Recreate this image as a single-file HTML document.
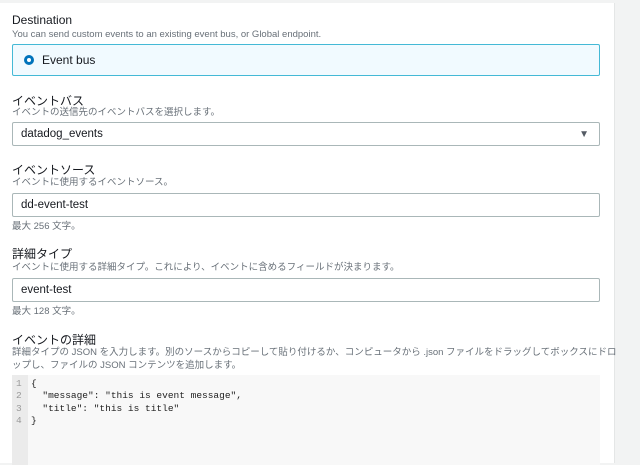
<!DOCTYPE html>
<html><head><meta charset="utf-8"><style>
*{margin:0;padding:0;box-sizing:border-box}
body{width:640px;height:458px;overflow:hidden;background:#f2f3f3;font-family:"Liberation Sans","Noto Sans CJK JP",sans-serif;color:#16191f;position:relative}
.panel{position:absolute;left:0;top:3px;width:615px;height:460px;background:#fff;border-right:1px solid #e4e6e6}
.a{position:absolute;white-space:nowrap;line-height:1.2}
.l{font-size:12px;color:#16191f}
.d{font-size:9.5px;color:#687078}
.in{position:absolute;left:12px;width:588px;height:24px;border:1px solid #aab7b8;border-radius:2px;font-size:11.5px;padding:5px 8px;background:#fff;line-height:1.2}
</style></head><body>
<div class="panel"></div>
<div class="a l" style="left:12px;top:13px">Destination</div>
<div class="a d" style="left:12px;top:29px">You can send custom events to an existing event bus, or Global endpoint.</div>
<div style="position:absolute;left:12px;top:44px;width:588px;height:32px;background:#f1faff;border:1px solid #44b9d6;border-radius:2px"></div>
<div style="position:absolute;left:24px;top:55px;width:10px;height:10px;border-radius:50%;border:3px solid #0073bb;background:#fff"></div>
<div class="a l" style="left:42px;top:53px">Event bus</div>
<div class="a l" style="left:12px;top:94px">イベントバス</div>
<div class="a d" style="left:12px;top:107px">イベントの送信先のイベントバスを選択します。</div>
<div class="in" style="top:122px">datadog_events<span style="position:absolute;right:10px;top:6px;font-size:10px;color:#545b64">▼</span></div>
<div class="a l" style="left:12px;top:163px">イベントソース</div>
<div class="a d" style="left:12px;top:177px">イベントに使用するイベントソース。</div>
<div class="in" style="top:193px">dd-event-test</div>
<div class="a d" style="left:12px;top:221px">最大 256 文字。</div>
<div class="a l" style="left:12px;top:247px">詳細タイプ</div>
<div class="a d" style="left:12px;top:262px">イベントに使用する詳細タイプ。これにより、イベントに含めるフィールドが決まります。</div>
<div class="in" style="top:278px">event-test</div>
<div class="a d" style="left:12px;top:306px">最大 128 文字。</div>
<div class="a l" style="left:12px;top:333px">イベントの詳細</div>
<div class="a d" style="left:12px;top:347px">詳細タイプの JSON を入力します。別のソースからコピーして貼り付けるか、コンピュータから .json ファイルをドラッグしてボックスにドロ</div>
<div class="a d" style="left:12px;top:360px">ップし、ファイルの JSON コンテンツを追加します。</div>
<div style="position:absolute;left:12px;top:375px;width:588px;height:90px;background:#f8f8f8"></div>
<div style="position:absolute;left:12px;top:375px;width:16px;height:90px;background:#ebebeb"></div>
<pre style="position:absolute;left:16px;top:378px;font-family:'Liberation Mono',monospace;font-size:9.5px;line-height:12.3px;color:#999">1
2
3
4</pre>
<pre style="position:absolute;left:31px;top:378px;font-family:'Liberation Mono',monospace;font-size:9.5px;line-height:12.3px;color:#222">{
  "message": "this is event message",
  "title": "this is title"
}</pre>
</body></html>
